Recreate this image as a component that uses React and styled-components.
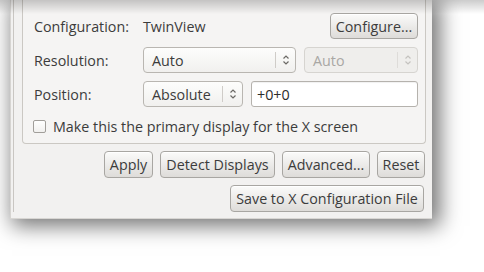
import React from "react";
import styled, { createGlobalStyle } from "styled-components";

const Global = createGlobalStyle`
  html, body { margin: 0; padding: 0; background: #ffffff; }
  body { width: 484px; height: 272px; overflow: hidden; font-family: "Open Sans", "DejaVu Sans", sans-serif; }
`;

const Stage = styled.div`
  position: relative;
  width: 484px;
  height: 272px;
  padding-left: 10px;
  box-sizing: border-box;
`;

const TopShade = styled.div`
  position: absolute;
  left: 0;
  top: 0;
  width: 484px;
  height: 14px;
  background: linear-gradient(to bottom, rgba(0,0,0,0.2), rgba(0,0,0,0));
  pointer-events: none;
`;

const Window = styled.div`
  width: 422px;
  height: 219px;
  box-sizing: border-box;
  background: #f2f1f0;
  border-left: 1px solid #d6d4d1;
  border-bottom: 1px solid #d8d6d3;
  box-shadow: 5px 4px 20px 3px rgba(0,0,0,0.55);
  padding-left: 2px;
  padding-right: 5px;
  display: flex;
  flex-direction: column;
  font-size: 14.3px;
  color: #3c3c3c;
`;

const Page = styled.div`
  height: 212px;
  box-sizing: border-box;
  border-left: 1px solid #c9c6c2;
  padding-left: 8px;
  display: flex;
  flex-direction: column;
`;

const Frame = styled.div`
  width: 404px;
  height: 145px;
  box-sizing: border-box;
  border: 1px solid #cbc8c3;
  border-top: none;
  border-radius: 0 0 4px 4px;
  background: #f5f4f3;
  padding: 13px 7px 0 11px;
  display: flex;
  flex-direction: column;
  gap: 8px;
`;

const Row = styled.div`
  display: flex;
  align-items: center;
  height: 26px;
`;

const Label = styled.div`
  width: 109px;
  flex: none;
`;

const Value = styled.div`
  flex: 1;
`;

const Button = styled.button`
  font: inherit;
  font-size: 14.3px;
  color: #3c3c3c;
  height: ${(p) => p.$h || 27}px;
  width: ${(p) => p.$w}px;
  flex: none;
  padding: 0;
  box-sizing: border-box;
  border: 1px solid #a8a6a2;
  border-radius: 4px;
  background: linear-gradient(to bottom, #fbfbfa, #e9e8e6 60%, #dedcd9);
  box-shadow: inset 0 1px 0 #ffffff;
  display: flex;
  align-items: center;
  justify-content: center;
  white-space: nowrap;
`;

const Combo = styled.div`
  width: ${(p) => p.$w}px;
  height: 26px;
  flex: none;
  box-sizing: border-box;
  border: 1px solid ${(p) => (p.$disabled ? "#d6d4d0" : "#b9b6b1")};
  border-radius: 4px;
  background: ${(p) =>
    p.$disabled
      ? "#efeeec"
      : "linear-gradient(to bottom, #fdfdfc, #f1f0ee)"};
  display: flex;
  align-items: center;
  padding-left: 8px;
  color: ${(p) => (p.$disabled ? "#a9a7a4" : "#3c3c3c")};
`;

const ComboText = styled.div`
  flex: 1;
`;

const Sep = styled.div`
  width: 1px;
  height: 16px;
  background: ${(p) => (p.$disabled ? "#dedcd9" : "#cfccc8")};
`;

const Arrows = styled.div`
  width: 19px;
  display: flex;
  justify-content: center;
  align-items: center;
`;

const Entry = styled.div`
  flex: none;
  width: 167px;
  height: 26px;
  box-sizing: border-box;
  border: 1px solid #b5b2ad;
  border-radius: 3px;
  background: #ffffff;
  display: flex;
  align-items: center;
  padding-left: 5px;
  color: #2c2c2c;
  box-shadow: inset 0 1px 1px rgba(0,0,0,0.06);
`;

const Gap = styled.div`
  width: 8px;
  flex: none;
`;

const CheckRow = styled.label`
  display: flex;
  align-items: center;
  height: 20px;
  margin-top: 1px;
  gap: 7px;
`;

const Check = styled.span`
  width: 13px;
  height: 13px;
  box-sizing: border-box;
  border: 1px solid #a19e9a;
  border-radius: 2px;
  background: linear-gradient(to bottom, #ffffff, #f1f0ee);
  margin-left: -1px;
`;

const ButtonRow = styled.div`
  display: flex;
  justify-content: flex-end;
  gap: ${(p) => p.$gap || 7}px;
  padding-right: ${(p) => p.$pr || 0}px;
  margin-top: 7px;
`;

const SpinArrows = ({ disabled }) => (
  <svg width="8" height="12" viewBox="0 0 8 12">
    <path d="M1.5 4.5 L4 2 L6.5 4.5" fill="none" stroke={disabled ? "#c4c2bf" : "#6b6965"} strokeWidth="1.2" />
    <path d="M1.5 7.5 L4 10 L6.5 7.5" fill="none" stroke={disabled ? "#c4c2bf" : "#6b6965"} strokeWidth="1.2" />
  </svg>
);

export default function App() {
  return (
    <>
      <Global />
      <Stage>
        <Window>
          <Page>
            <Frame>
              <Row>
                <Label>Configuration:</Label>
                <Value>TwinView</Value>
                <Button $w={88} $h={26}>Configure...</Button>
              </Row>
              <Row>
                <Label>Resolution:</Label>
                <Combo $w={153}>
                  <ComboText>Auto</ComboText>
                  <Sep />
                  <Arrows><SpinArrows /></Arrows>
                </Combo>
                <Gap />
                <Combo $w={114} $disabled>
                  <ComboText>Auto</ComboText>
                  <Sep $disabled />
                  <Arrows><SpinArrows disabled /></Arrows>
                </Combo>
              </Row>
              <Row>
                <Label>Position:</Label>
                <Combo $w={100}>
                  <ComboText>Absolute</ComboText>
                  <Sep />
                  <Arrows><SpinArrows /></Arrows>
                </Combo>
                <Gap />
                <Entry>+0+0</Entry>
              </Row>
              <CheckRow>
                <Check />
                Make this the primary display for the X screen
              </CheckRow>
            </Frame>
            <ButtonRow $gap={7} $pr={2}>
              <Button $w={49}>Apply</Button>
              <Button $w={115}>Detect Displays</Button>
              <Button $w={88}>Advanced...</Button>
              <Button $w={48}>Reset</Button>
            </ButtonRow>
            <ButtonRow $pr={3}>
              <Button $w={194}>Save to X Configuration File</Button>
            </ButtonRow>
          </Page>
        </Window>
        <TopShade />
      </Stage>
    </>
  );
}
